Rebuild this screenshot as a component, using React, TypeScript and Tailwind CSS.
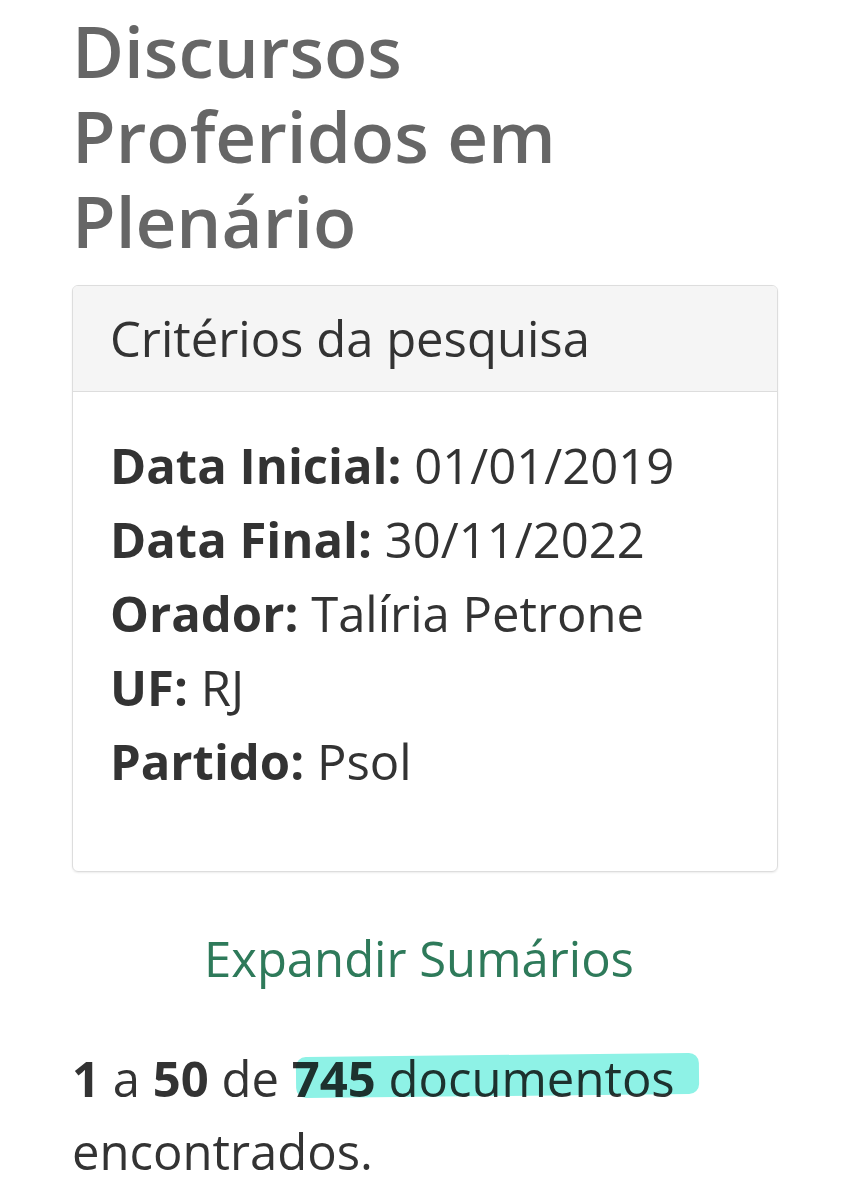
import React from 'react';

const criteria: { label: string; value: string }[] = [
  { label: 'Data Inicial:', value: '01/01/2019' },
  { label: 'Data Final:', value: '30/11/2022' },
  { label: 'Orador:', value: 'Talíria Petrone' },
  { label: 'UF:', value: 'RJ' },
  { label: 'Partido:', value: 'Psol' },
];

export default function App(): React.ReactElement {
  return (
    <div className="min-h-[1200px] bg-white pl-[72px] pr-[72px] font-['Open_Sans',sans-serif] text-[#333333]">
      <h1 className="max-w-[610px] pt-[8px] text-[71px] font-semibold leading-[85px] text-[#666666]">
        Discursos Proferidos em Plenário
      </h1>

      <div className="mt-[22px] w-[706px] overflow-hidden rounded-[6px] border border-[#dddddd] shadow-[0_1px_2px_rgba(0,0,0,0.08)]">
        <div className="border-b border-[#dddddd] bg-[#f5f5f5] px-[37px] py-[19px] text-[49px] leading-[67px]">
          Critérios da pesquisa
        </div>
        <div className="px-[37px] pt-[36px] pb-[73px] text-[49px] leading-[74px]">
          {criteria.map((c) => (
            <div key={c.label}>
              <span className="font-bold">{c.label}</span> {c.value}
            </div>
          ))}
        </div>
      </div>

      <div className="mt-[54px] w-[694px] text-center text-[49px] leading-[64px] text-[#2e7a5a]">
        Expandir Sumários
      </div>

      <p className="mt-[52px] w-[706px] text-[49px] leading-[73px]">
        <span className="font-bold">1</span> a <span className="font-bold">50</span> de{' '}
        <span className="relative">
          <span className="absolute left-[4px] right-[-24px] top-[10px] h-[41px] -rotate-[0.6deg] rounded-[10px] bg-[#8ef2e6] mix-blend-multiply" />
          <span className="font-bold">745</span> documentos
        </span>{' '}
        encontrados.
      </p>
    </div>
  );
}
